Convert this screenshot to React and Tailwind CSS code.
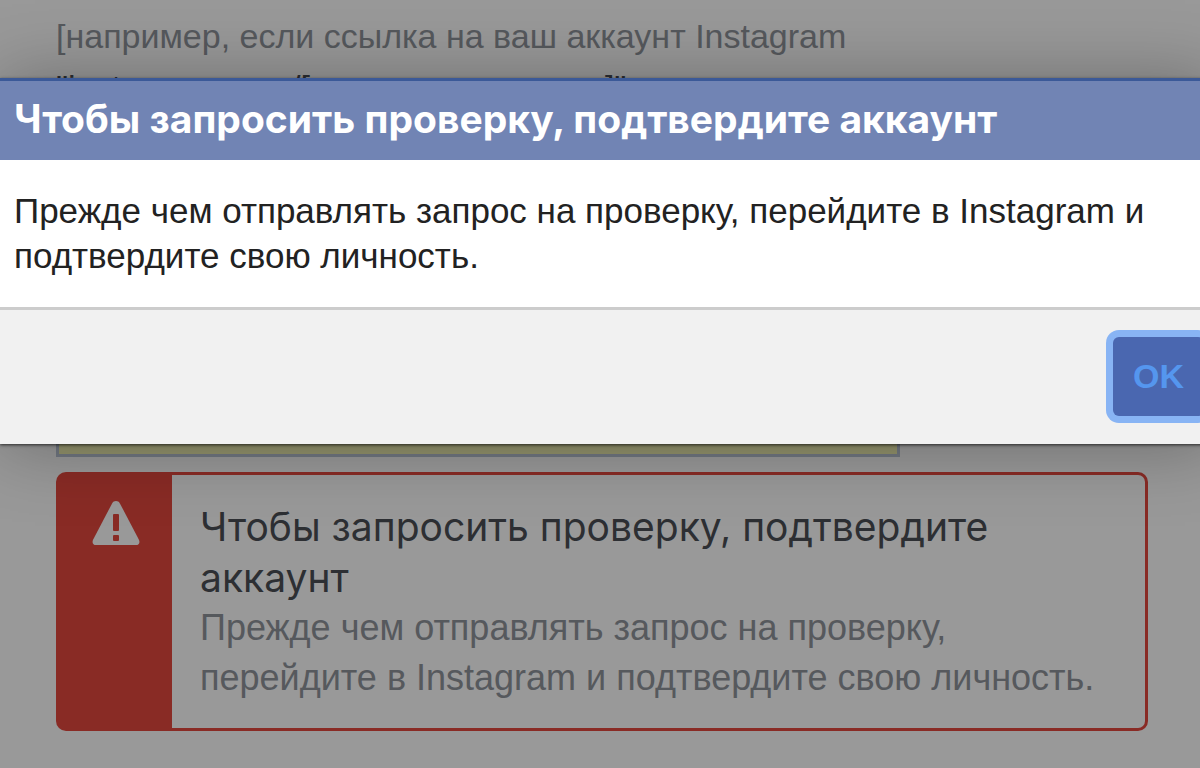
import React from "react";

const TITLE = "Чтобы запросить проверку, подтвердите аккаунт";
const MESSAGE =
  "Прежде чем отправлять запрос на проверку, перейдите в Instagram и подтвердите свою личность.";

function WarningIcon() {
  return (
    <svg viewBox="0 0 48 46" className="h-[46px] w-12" aria-hidden="true">
      <path
        d="M24 1c1.700 0 3 .8 3.900 2.400L46.800 39.500c1.500 2.900.300 5.500-2.900 5.500H4.100c-3.200 0-4.400-2.600-2.900-5.500L20.100 3.400C21 1.800 22.300 1 24 1z"
        fill="#fff"
      />
      <rect x="21" y="14" width="6" height="17" rx="1" fill="#e4483f" />
      <rect x="21" y="35" width="6" height="6" rx="1" fill="#e4483f" />
    </svg>
  );
}

function ErrorAlert() {
  return (
    <div
      role="alert"
      className="mt-[15px] flex overflow-hidden rounded-[10px] bg-[#e4483f] p-[3px]"
    >
      <div className="flex w-[113px] shrink-0 justify-center pt-[25px]">
        <WarningIcon />
      </div>
      <div className="grow rounded-r-[7px] bg-white pt-[26px] pr-10 pb-[25px] pl-7">
        <h3 className="font-['Inter',Arial,sans-serif] text-[39px] leading-[51px] text-[#4b4f56]">
          {TITLE}
        </h3>
        <p className="text-[36px] leading-[50px] text-[#90949c]">{MESSAGE}</p>
      </div>
    </div>
  );
}

function Dialog() {
  return (
    <div
      role="dialog"
      aria-labelledby="dialog-title"
      className="absolute top-[78px] left-0 -right-5 bg-white shadow-[0_2px_70px_rgba(0,0,0,0.3),0_1px_3px_rgba(0,0,0,0.7)]"
    >
      <h2
        id="dialog-title"
        className="border-t-3 border-[#3b5998] bg-[#7184b4] px-[14px] pt-[15px] pb-[19px] font-['Inter',Arial,sans-serif] text-[39px] leading-[45px] font-bold text-white"
      >
        {TITLE}
      </h2>
      <p className="pt-7 pr-12 pb-[29px] pl-[14px] text-[35px] leading-[45px] text-[#222]">
        {MESSAGE}
      </p>
      <div className="flex justify-end border-t-3 border-[#ccc] bg-[#f1f1f1] pt-[27px] pr-4 pb-7">
        <button
          type="button"
          className="h-[79px] rounded-md bg-[#4a67b0] px-5 text-[34px] font-bold text-[#5596ee] ring-7 ring-[#88b4f4]"
        >
          OK
        </button>
      </div>
    </div>
  );
}

export default function App() {
  return (
    <div className="relative min-h-screen overflow-hidden bg-white font-['Liberation_Sans',Arial,sans-serif]">
      <main className="pt-[11px] pr-[52px] pb-9 pl-14">
        <label
          htmlFor="username"
          className="block text-[34px] leading-[51px] text-[#90949c]"
        >
          [например, если ссылка на ваш аккаунт Instagram
          <span className="block text-[#4b4f56]">
            "instagram.com/[имя_пользователя]"
          </span>
        </label>
        <input
          id="username"
          type="text"
          className="mt-[264px] block h-20 w-[844px] max-w-full border-3 border-[#bdc7d8] bg-[#f5f5b4] px-4 text-[34px]"
        />
        <ErrorAlert />
      </main>
      <div className="absolute inset-0 bg-black/40" />
      <Dialog />
    </div>
  );
}
